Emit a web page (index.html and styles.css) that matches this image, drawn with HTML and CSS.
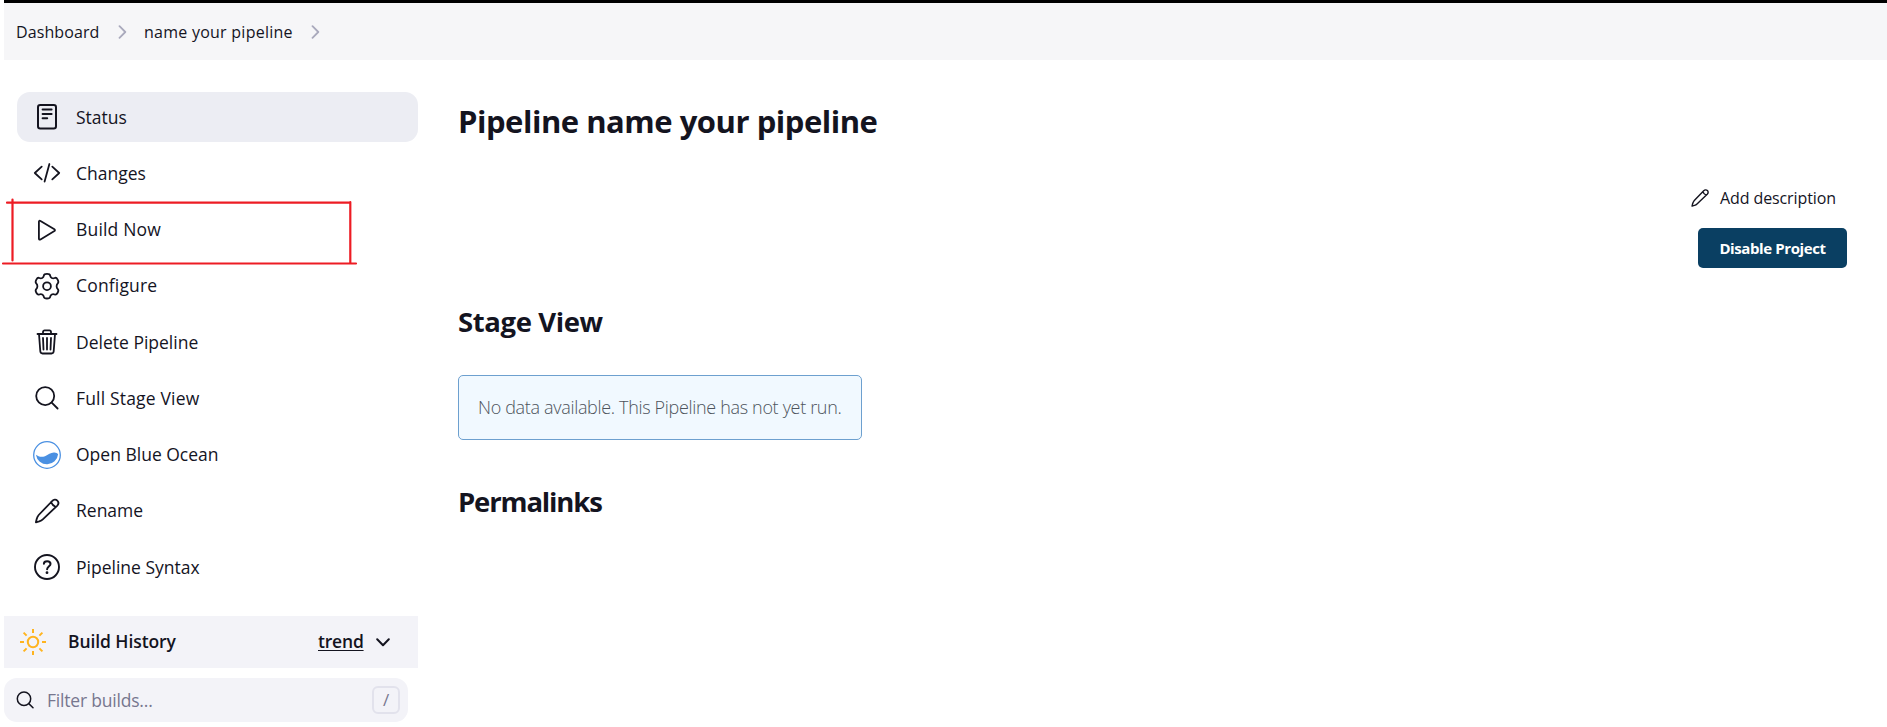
FILE: index.html
```html
<!DOCTYPE html>
<html lang="en">
<head>
<meta charset="UTF-8" />
<meta name="viewport" content="width=device-width, initial-scale=1" />
<title>name your pipeline</title>
<link rel="stylesheet" href="styles.css">
</head>
<body>
  <header class="breadcrumbs">
    <a class="crumb-home" href="#">Dashboard</a>
    <svg class="crumb-arrow" viewBox="0 0 9 14"><path d="M1.5 1.2 7.3 7 1.5 12.8" /></svg>
    <a class="crumb-job" href="#">name your pipeline</a>
    <svg class="crumb-arrow" viewBox="0 0 9 14"><path d="M1.5 1.2 7.3 7 1.5 12.8" /></svg>
  </header>

  <div class="page">
    <aside class="side-panel">
      <nav class="tasks">
        <a class="task active" href="#">
          <svg class="icon" viewBox="0 0 28 28"><rect x="5" y="2.1" width="18" height="23.4" rx="2.2" stroke-width="2" /><path d="M9.6 6.6H18.6M9.6 10.9H18.6M9.6 15.2H14.2" stroke-width="2" /></svg>
          <span>Status</span>
        </a>
        <a class="task" href="#">
          <svg class="icon" viewBox="0 0 28 28"><path d="M8.7 7.6 1.8 14 8.7 20.4M19.3 7.6 26.2 14 19.3 20.4M16.4 5 11.6 22.6" /></svg>
          <span>Changes</span>
        </a>
        <a class="task" href="#">
          <svg class="icon" viewBox="0 0 28 28"><path d="M5.9 5.8V22.6C5.9 23.7 6.6 23.9 7.5 23.4L21.4 15.1C22.1 14.6 22.1 13.8 21.4 13.3L7.5 5C6.6 4.5 5.9 4.7 5.9 5.8Z" /></svg>
          <span class="wide">Build Now</span>
          <svg class="marker" viewBox="0 0 360 68"><path d="M7 5.7H350M12.5 2.5V63.5M350.3 5V66M3 66.5H356" /></svg>
        </a>
        <a class="task" href="#">
          <svg class="icon" viewBox="0 0 28 28"><circle cx="14" cy="14.2" r="3.9" /><path d="M14 1.9Q16.9 1.9 17.15 3.55Q17.4 5.2 18.75 5.95Q20.1 6.7 21.7 5.95Q23.3 5.2 24.65 7.65Q26 10.1 24.8 11.3Q23.6 12.5 23.6 14.2Q23.6 15.9 24.8 17.1Q26 18.3 24.65 20.75Q23.3 23.2 21.7 22.45Q20.1 21.7 18.75 22.45Q17.4 23.2 17.15 24.85Q16.9 26.5 14 26.5Q11.1 26.5 10.85 24.85Q10.6 23.2 9.25 22.45Q7.9 21.7 6.3 22.45Q4.7 23.2 3.35 20.75Q2 18.3 3.2 17.1Q4.4 15.9 4.4 14.2Q4.4 12.5 3.2 11.3Q2 10.1 3.35 7.65Q4.7 5.2 6.3 5.95Q7.9 6.7 9.25 5.95Q10.6 5.2 10.85 3.55Q11.1 1.9 14 1.9Z" /></svg>
          <span class="wide">Configure</span>
        </a>
        <a class="task" href="#">
          <svg class="icon" viewBox="0 0 28 28"><path d="M4.5 6H23.5M6 6 7.3 23.3C7.4 24.7 8.2 25.5 9.5 25.5H18.5C19.8 25.5 20.6 24.7 20.7 23.3L22 6M10 6V4C10 3 10.7 2.4 11.6 2.4H16.4C17.3 2.4 18 3 18 4V6M14 10V21.5M10 10 10.5 21.5M18 10 17.5 21.5" /></svg>
          <span>Delete Pipeline</span>
        </a>
        <a class="task" href="#">
          <svg class="icon" viewBox="0 0 28 28"><circle cx="12.2" cy="12.1" r="9" /><path d="M18.7 18.6 24.6 24.5" /></svg>
          <span class="wide">Full Stage View</span>
        </a>
        <a class="task" href="#">
          <svg class="icon ocean" viewBox="0 0 28 28"><circle cx="14" cy="14" r="13.3" /><path class="wave" d="M2.9 13.8C5.5 15.8 8.6 16.4 12 15.2C15.5 13.8 18 11.2 21.5 11.6C23 11.8 24.3 12.2 25.1 13.2A11.2 11.2 0 0 1 2.9 13.8Z" /></svg>
          <span>Open Blue Ocean</span>
        </a>
        <a class="task" href="#">
          <svg class="icon" viewBox="0 0 28 28"><path d="M19.2 4C20.8 2.4 22.8 2.1 24.3 3.6C25.8 5.1 25.7 7.2 24.1 8.8L9.8 22.3C8.7 23.4 7.6 23.9 6.2 24.4L2.9 25.3L3.7 22C4.1 20.4 4.5 19.4 5.7 18ZM18 5.2C19 7.5 20.5 9.1 22.8 10" /></svg>
          <span>Rename</span>
        </a>
        <a class="task" href="#">
          <svg class="icon" viewBox="0 0 28 28"><circle cx="14" cy="14" r="12" stroke-width="1.9" /><path d="M10.9 10.7C11 7.4 17.4 7.3 17.5 10.9C17.5 13.1 14.2 13.3 14.1 16.3" stroke-width="2" /><circle class="dot" cx="14" cy="19.7" r="1.4" /></svg>
          <span>Pipeline Syntax</span>
        </a>
      </nav>

      <div class="history-header">
        <svg class="sun" viewBox="0 0 28 28"><circle cx="14" cy="14" r="5.2" /><path d="M14 1V5M14 23V27M1 14H5M23 14H27M4.6 4.6 7.6 7.6M20.4 20.4 23.4 23.4M23.4 4.6 20.4 7.6M7.6 20.4 4.6 23.4" /></svg>
        <span class="history-title">Build History</span>
        <a class="trend" href="#">trend</a>
        <svg class="chevron" viewBox="0 0 14 9"><path d="M1.2 1.3 7 7.3 12.8 1.3" /></svg>
      </div>

      <div class="filter">
        <svg class="filter-icon" viewBox="0 0 18 18"><circle cx="8" cy="7.8" r="6.7" /><path d="M12.8 12.6 17 16.8" /></svg>
        <span class="filter-text">Filter builds...</span>
        <kbd class="shortcut">/</kbd>
      </div>
    </aside>

    <main class="main-panel">
      <h1>Pipeline name your pipeline</h1>
      <div class="actions">
        <a class="add-description" href="#">
          <svg class="icon-small" viewBox="0 0 28 28"><path d="M19.2 4C20.8 2.4 22.8 2.1 24.3 3.6C25.8 5.1 25.7 7.2 24.1 8.8L9.8 22.3C8.7 23.4 7.6 23.9 6.2 24.4L2.9 25.3L3.7 22C4.1 20.4 4.5 19.4 5.7 18ZM18 5.2C19 7.5 20.5 9.1 22.8 10" /></svg>
          <span>Add description</span>
        </a>
        <button class="disable" type="button">Disable Project</button>
      </div>
      <h2 class="stage-title">Stage View</h2>
      <div class="notice">No data available. This Pipeline has not yet run.</div>
      <h2 class="permalinks-title">Permalinks</h2>
    </main>
  </div>
</body>
</html>
```
FILE: styles.css
```css
* {
  box-sizing: border-box;
}
body {
  margin: 0;
  padding-left: 4px;
  height: 727px;
  overflow: hidden;
  background: #fff;
  color: #14141f;
  font-family: "Open Sans", "Noto Sans", sans-serif;
  font-size: 17.5px;
  font-weight: 500;
  white-space: nowrap;
}
a {
  color: inherit;
  text-decoration: none;
}
svg {
  display: block;
  flex: none;
  fill: none;
  stroke: currentColor;
  stroke-width: 1.8;
  stroke-linecap: round;
  stroke-linejoin: round;
}
.breadcrumbs {
  display: flex;
  align-items: center;
  height: 60px;
  padding: 1px 0 0 12px;
  border-top: 3px solid #000;
  background: #f6f6f8;
  font-size: 16px;
}
.crumb-home {
  width: 102px;
  letter-spacing: 0.1px;
}
.crumb-job {
  width: 167px;
  margin-left: 17px;
  letter-spacing: 0.25px;
}
.crumb-arrow {
  width: 9px;
  height: 14px;
  color: #a9a9bc;
}
.page {
  display: flex;
}
.side-panel {
  width: 414px;
  padding-top: 32px;
}
.tasks {
  display: flex;
  flex-direction: column;
  gap: 6.25px;
  padding-left: 13px;
}
.task {
  position: relative;
  display: flex;
  align-items: center;
  gap: 15px;
  height: 50px;
  padding-left: 16px;
  border-radius: 13px;
}
.task span {
  padding-bottom: 1px;
}
.task .wide {
  letter-spacing: 0.17px;
}
.task.active {
  background: #ecedf3;
}
.icon {
  width: 28px;
  height: 28px;
}
.dot {
  fill: currentColor;
  stroke: none;
}
.ocean {
  color: #4a90e2;
  stroke-width: 1.3;
}
.wave {
  fill: currentColor;
  stroke: none;
}
/* hand-drawn frame around the build link */
.marker {
  position: absolute;
  left: -17px;
  top: -8px;
  width: 360px;
  height: 68px;
  overflow: visible;
  color: #ed1c24;
  stroke-width: 2.2;
}
.history-header {
  display: flex;
  align-items: center;
  height: 52px;
  margin-top: 24px;
  padding-left: 15px;
  background: #f3f3f8;
  font-weight: 600;
}
.sun {
  width: 28px;
  height: 28px;
  color: #ffb41f;
  stroke-width: 2;
  stroke-linecap: butt;
}
.history-title {
  width: 250px;
  margin-left: 21px;
  padding-bottom: 3px;
  letter-spacing: -0.08px;
}
.trend {
  width: 58px;
  padding-bottom: 3px;
  letter-spacing: -0.2px;
  text-decoration: underline;
  text-underline-offset: 2px;
}
.chevron {
  width: 14px;
  height: 9px;
  stroke-width: 2;
}
.filter {
  display: flex;
  align-items: center;
  width: 404px;
  height: 44px;
  margin-top: 10px;
  padding: 0 8px 0 12px;
  border-radius: 13px;
  background: #f3f3f8;
}
.filter-icon {
  width: 18px;
  height: 18px;
  stroke-width: 1.5;
}
.filter-text {
  flex: 1;
  margin-left: 13px;
  color: #77778f;
  letter-spacing: -0.2px;
}
.shortcut {
  width: 28px;
  height: 28px;
  border: 2px solid #e2e2ec;
  border-radius: 6px;
  color: #77778f;
  font: 500 17px/23px "Open Sans", sans-serif;
  text-align: center;
}
.main-panel {
  flex: 1;
  padding: 38px 40px 0;
}
h1,
h2 {
  margin: 0;
  font-weight: 700;
}
h1 {
  font-size: 31px;
  line-height: 46px;
  letter-spacing: -0.48px;
}
.actions {
  display: flex;
  flex-direction: column;
  align-items: flex-end;
  margin-top: 41px;
  font-size: 16px;
}
.add-description {
  display: flex;
  align-items: center;
  gap: 10px;
  height: 26px;
  margin-right: 11px;
}
.add-description span {
  width: 116px;
  letter-spacing: -0.1px;
}
.icon-small {
  width: 20px;
  height: 20px;
  stroke-width: 2;
}
.disable {
  width: 149px;
  height: 40px;
  margin-top: 17px;
  padding: 0;
  border: none;
  border-radius: 5px;
  background: #0a3f62;
  color: #fff;
  font: 700 15px "Open Sans", sans-serif;
  letter-spacing: -0.4px;
}
h2 {
  font-size: 27.5px;
  line-height: 40px;
}
.stage-title {
  margin-top: 34px;
  letter-spacing: -0.4px;
}
.notice {
  width: 404px;
  height: 65px;
  margin-top: 33px;
  padding-left: 19px;
  border: 1px solid #6da0cf;
  border-radius: 5px;
  background: #f1f9ff;
  color: #4d545c;
  font-size: 18px;
  font-weight: 300;
  line-height: 63px;
  letter-spacing: -0.33px;
}
.permalinks-title {
  margin-top: 42px;
  letter-spacing: -1.15px;
}
```
